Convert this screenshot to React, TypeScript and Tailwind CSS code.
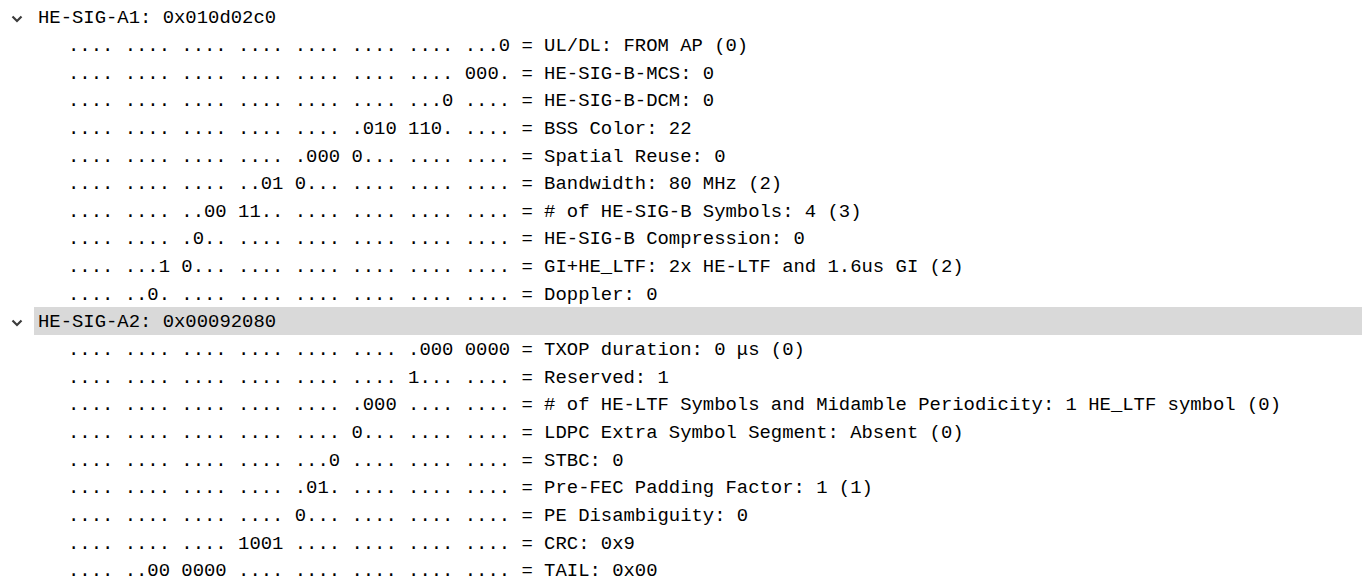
import React from 'react'

type Node = { label: string; children: string[]; selected?: boolean }

const tree: Node[] = [
  {
    label: 'HE-SIG-A1: 0x010d02c0',
    children: [
      '.... .... .... .... .... .... .... ...0 = UL/DL: FROM AP (0)',
      '.... .... .... .... .... .... .... 000. = HE-SIG-B-MCS: 0',
      '.... .... .... .... .... .... ...0 .... = HE-SIG-B-DCM: 0',
      '.... .... .... .... .... .010 110. .... = BSS Color: 22',
      '.... .... .... .... .000 0... .... .... = Spatial Reuse: 0',
      '.... .... .... ..01 0... .... .... .... = Bandwidth: 80 MHz (2)',
      '.... .... ..00 11.. .... .... .... .... = # of HE-SIG-B Symbols: 4 (3)',
      '.... .... .0.. .... .... .... .... .... = HE-SIG-B Compression: 0',
      '.... ...1 0... .... .... .... .... .... = GI+HE_LTF: 2x HE-LTF and 1.6us GI (2)',
      '.... ..0. .... .... .... .... .... .... = Doppler: 0',
    ],
  },
  {
    label: 'HE-SIG-A2: 0x00092080',
    selected: true,
    children: [
      '.... .... .... .... .... .... .000 0000 = TXOP duration: 0 μs (0)',
      '.... .... .... .... .... .... 1... .... = Reserved: 1',
      '.... .... .... .... .... .000 .... .... = # of HE-LTF Symbols and Midamble Periodicity: 1 HE_LTF symbol (0)',
      '.... .... .... .... .... 0... .... .... = LDPC Extra Symbol Segment: Absent (0)',
      '.... .... .... .... ...0 .... .... .... = STBC: 0',
      '.... .... .... .... .01. .... .... .... = Pre-FEC Padding Factor: 1 (1)',
      '.... .... .... .... 0... .... .... .... = PE Disambiguity: 0',
      '.... .... .... 1001 .... .... .... .... = CRC: 0x9',
      '.... ..00 0000 .... .... .... .... .... = TAIL: 0x00',
    ],
  },
]

function Chevron() {
  return (
    <svg width="12" height="8" viewBox="0 0 12 8" className="text-[#3c3c3c]">
      <path d="M1.5 1.5 L6 6 L10.5 1.5" fill="none" stroke="currentColor" strokeWidth="2.2" />
    </svg>
  )
}

export default function App() {
  return (
    <div
      className="w-[1362px] h-[586px] overflow-hidden bg-white text-black pt-[3px] text-[18.9px] leading-none whitespace-pre"
      style={{ fontFamily: '"Liberation Mono", "DejaVu Sans Mono", monospace' }}
    >
      {tree.map((node) => (
        <div key={node.label}>
          {/* 分组标题行 */}
          <div className="flex items-center h-[27.65px]">
            <div className="w-[34px] shrink-0 h-full flex items-center justify-center pl-[7px] pr-[7px] pt-[4px]">
              <Chevron />
            </div>
            <div className={'flex-1 h-full flex items-center pl-[4px] pt-[4px] ' + (node.selected ? 'bg-[#d9d9d9]' : '')}>
              {node.label}
            </div>
          </div>
          {node.children.map((line) => (
            <div key={line} className="flex items-center h-[27.65px] pl-[68px] pt-[4px]">
              {line}
            </div>
          ))}
        </div>
      ))}
    </div>
  )
}
